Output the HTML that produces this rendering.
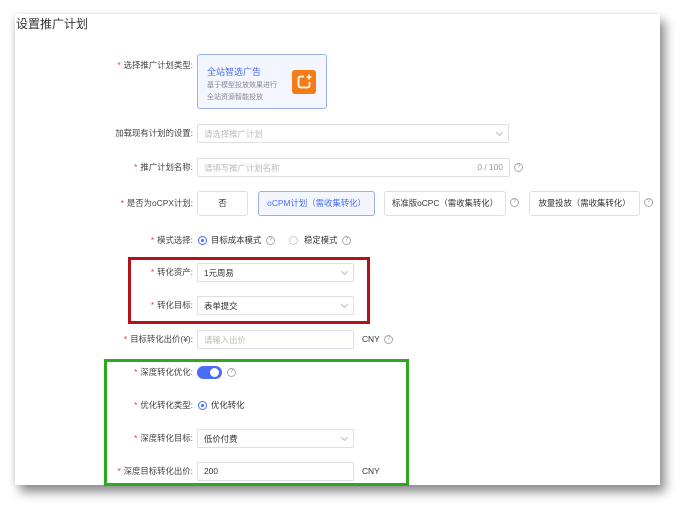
<!DOCTYPE html>
<html><head><meta charset="utf-8">
<style>
*{margin:0;padding:0;box-sizing:border-box}
body{width:695px;height:521px;background:#fff;position:relative;overflow:hidden;font-family:"Liberation Sans","Noto Sans CJK SC",sans-serif;font-size:8.4px;color:#333}
.card{position:absolute;left:15px;top:14px;width:645px;height:471px;background:#fff;box-shadow:5px 7px 10px rgba(0,0,0,.45),-2px 0 6px rgba(0,0,0,.08)}
.a{position:absolute;white-space:nowrap}
.lbl{position:absolute;right:502px;white-space:nowrap;line-height:12px;color:#444}
.lbl b{color:#e33;font-weight:normal;margin-right:3px}
.box{position:absolute;border:1px solid #dcdfe6;border-radius:2px;background:#fff}
.ph{color:#bbb}
.q{position:absolute;width:9px;height:9px;border:1px solid #aaa;border-radius:50%;font-size:6px;line-height:7px;text-align:center;color:#999}
.arr{position:absolute;right:6px;top:5px;width:5px;height:5px;border-right:1px solid #bbb;border-bottom:1px solid #bbb;transform:rotate(45deg)}
.btn{position:absolute;height:25px;border:1px solid #dcdfe6;border-radius:3px;text-align:center;line-height:23px;background:#fff}
.radio{position:absolute;width:9px;height:9px;border-radius:50%;border:1px solid #4a6cf7}
.radio::after{content:"";position:absolute;left:2px;top:2px;width:3px;height:3px;border-radius:50%;background:#4a6cf7}
</style></head><body>
<div class="card"></div>
<div class="a" style="left:16px;top:15px;font-size:12px;color:#333">设置推广计划</div>

<div class="lbl" style="top:59px"><b>*</b>选择推广计划类型:</div>
<div class="a" style="left:197px;top:54px;width:130px;height:55px;border:1px solid #9bb0f0;border-radius:3px;background:#f3f6ff"></div>
<div class="a" style="left:207px;top:65px;color:#4a6cf7;font-size:9px">全站智选广告</div>
<div class="a" style="left:207px;top:80px;color:#888;font-size:7px;line-height:12px">基于模型投放效果进行<br>全站资源智能投放</div>
<div class="a" style="left:292px;top:70px;width:24px;height:24px;background:#f57c14;border-radius:3px">
<svg width="24" height="24" viewBox="0 0 24 24"><path d="M12 6.5H8.5a2 2 0 0 0-2 2v7a2 2 0 0 0 2 2h7a2 2 0 0 0 2-2V12" fill="none" stroke="#fff" stroke-width="1.8"/><path d="M17 4.5v5M14.5 7h5" stroke="#fff" stroke-width="1.6"/></svg></div>

<div class="lbl" style="top:127px">加载现有计划的设置:</div>
<div class="box" style="left:197px;top:124px;width:312px;height:19px"><span class="a ph" style="left:6px;top:3px">请选择推广计划</span><i class="arr"></i></div>

<div class="lbl" style="top:161px"><b>*</b>推广计划名称:</div>
<div class="box" style="left:197px;top:158px;width:313px;height:19px"><span class="a ph" style="left:6px;top:3px">请填写推广计划名称</span><span class="a" style="right:6px;top:3px;color:#999">0 / 100</span></div>
<div class="q" style="left:514px;top:163px">?</div>

<div class="lbl" style="top:197px"><b>*</b>是否为oCPX计划:</div>
<div class="btn" style="left:197px;top:191px;width:51px">否</div>
<div class="btn" style="left:258px;top:191px;width:117px;border-color:#9bb0f0;background:#f3f6ff;color:#4a6cf7">oCPM计划（需收集转化）</div>
<div class="btn" style="left:384px;top:191px;width:122px">标准版oCPC（需收集转化）</div>
<div class="q" style="left:510px;top:198px">?</div>
<div class="btn" style="left:529px;top:191px;width:111px">放量投放（需收集转化）</div>
<div class="q" style="left:644px;top:198px">?</div>

<div class="lbl" style="top:234px"><b>*</b>模式选择:</div>
<div class="radio" style="left:198px;top:236px"></div>
<div class="a" style="left:211px;top:234px;line-height:12px">目标成本模式</div>
<div class="q" style="left:266px;top:236px">?</div>
<div class="a" style="left:289px;top:236px;width:9px;height:9px;border:1px solid #ccc;border-radius:50%"></div>
<div class="a" style="left:304px;top:234px;line-height:12px">稳定模式</div>
<div class="q" style="left:342px;top:236px">?</div>

<div class="a" style="left:128px;top:257px;width:242px;height:67px;border:3px solid #b3121b"></div>
<div class="lbl" style="top:266px"><b>*</b>转化资产:</div>
<div class="box" style="left:197px;top:263px;width:157px;height:19px"><span class="a" style="left:6px;top:3px">1元周易</span><i class="arr"></i></div>
<div class="lbl" style="top:299px"><b>*</b>转化目标:</div>
<div class="box" style="left:197px;top:296px;width:157px;height:19px"><span class="a" style="left:6px;top:3px">表单提交</span><i class="arr"></i></div>

<div class="lbl" style="top:333px"><b>*</b>目标转化出价(¥):</div>
<div class="box" style="left:197px;top:330px;width:157px;height:19px"><span class="a ph" style="left:6px;top:3px">请输入出价</span></div>
<div class="a" style="left:362px;top:333px;line-height:12px">CNY</div>
<div class="q" style="left:384px;top:335px">?</div>

<div class="a" style="left:104px;top:359px;width:305px;height:127px;border:3px solid #2ea81d"></div>
<div class="lbl" style="top:366px"><b>*</b>深度转化优化:</div>
<div class="a" style="left:197px;top:366px;width:25px;height:13px;border-radius:7px;background:#4a6cf7"><div class="a" style="left:13px;top:2px;width:9px;height:9px;border-radius:50%;background:#fff"></div></div>
<div class="q" style="left:227px;top:368px">?</div>
<div class="lbl" style="top:399px"><b>*</b>优化转化类型:</div>
<div class="radio" style="left:198px;top:401px"></div>
<div class="a" style="left:211px;top:399px;line-height:12px">优化转化</div>
<div class="lbl" style="top:432px"><b>*</b>深度转化目标:</div>
<div class="box" style="left:197px;top:429px;width:157px;height:19px"><span class="a" style="left:6px;top:3px">低价付费</span><i class="arr"></i></div>
<div class="lbl" style="top:465px"><b>*</b>深度目标转化出价:</div>
<div class="box" style="left:197px;top:462px;width:157px;height:19px"><span class="a" style="left:6px;top:3px">200</span></div>
<div class="a" style="left:362px;top:465px;line-height:12px">CNY</div>
</body></html>
